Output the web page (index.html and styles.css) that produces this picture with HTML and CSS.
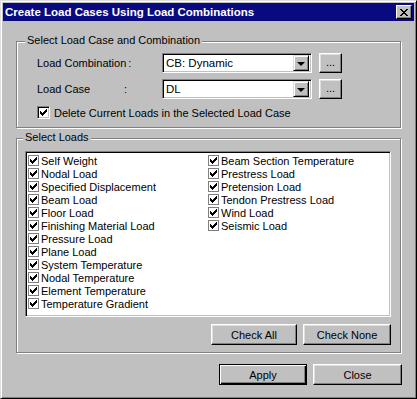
FILE: index.html
```html
<!DOCTYPE html>
<html lang="en">
<head>
  <meta charset="UTF-8">
  <title>Create Load Cases Using Load Combinations</title>
  <link rel="stylesheet" href="styles.css">
</head>
<body>
  <div class="window">
    <div class="titlebar">
      <span class="title">Create Load Cases Using Load Combinations</span>
      <span class="close-btn">
        <svg width="8" height="7" viewBox="0 0 8 7" shape-rendering="crispEdges"><path d="M0 0h2v1h1v1h2v-1h1v-1h2v1h-1v1h-1v1h-1v1h1v1h1v1h1v1h-2v-1h-1v-1h-2v1h-1v1h-2v-1h1v-1h1v-1h1v-1h-1v-1h-1z" fill="#000"/></svg>
      </span>
    </div>

    <div class="content">
      <div class="group group-case">
        <span class="group-title">Select Load Case and Combination</span>

        <div class="field-row">
          <span class="label"><span class="label-name">Load Combination</span>:</span>
          <div class="combo">
            <span class="combo-value">CB: Dynamic</span>
            <span class="combo-arrow"><i></i></span>
          </div>
          <span class="btn btn-dots">...</span>
        </div>

        <div class="field-row">
          <span class="label"><span class="label-name">Load Case</span>:</span>
          <div class="combo">
            <span class="combo-value">DL</span>
            <span class="combo-arrow"><i></i></span>
          </div>
          <span class="btn btn-dots">...</span>
        </div>

        <label class="check-row">
          <span class="checkbox">
            <svg width="7" height="7" viewBox="0 0 7 7" shape-rendering="crispEdges"><path d="M0 2H1V3H2V4H3V3H4V2H5V1H6V0H7V3H6V4H5V5H4V6H3V7H2V6H1V5H0Z" fill="#000"/></svg>
          </span>
          Delete Current Loads in the Selected Load Case
        </label>
      </div>

      <div class="group group-loads">
        <span class="group-title">Select Loads</span>

        <div class="loads-list" id="loads">
          <div class="loads-col"></div>
          <div class="loads-col"></div>
        </div>

        <div class="btn-row">
          <span class="btn btn-check-all">Check All</span>
          <span class="btn btn-check-none">Check None</span>
        </div>
      </div>

      <div class="btn-row dialog-buttons">
        <span class="btn btn-default">Apply</span>
        <span class="btn btn-close">Close</span>
      </div>
    </div>
  </div>

  <script>
    (function() {
      const columns = [
        ['Self Weight', 'Nodal Load', 'Specified Displacement', 'Beam Load', 'Floor Load',
         'Finishing Material Load', 'Pressure Load', 'Plane Load', 'System Temperature',
         'Nodal Temperature', 'Element Temperature', 'Temperature Gradient'],
        ['Beam Section Temperature', 'Prestress Load', 'Pretension Load',
         'Tendon Prestress Load', 'Wind Load', 'Seismic Load']
      ];
      const check = '<svg width="7" height="7" viewBox="0 0 7 7" shape-rendering="crispEdges"><path d="M0 2H1V3H2V4H3V3H4V2H5V1H6V0H7V3H6V4H5V5H4V6H3V7H2V6H1V5H0Z" fill="#000"/></svg>';
      const cols = document.querySelectorAll('#loads .loads-col');

      columns.forEach(function(items, c) {
        items.forEach(function(name) {
          const row = document.createElement('div');
          row.className = 'load-item';
          row.innerHTML = '<span class="list-check">' + check + '</span>' + name;
          cols[c].appendChild(row);
        });
      });
    })();
  </script>
</body>
</html>
```

FILE: styles.css
```css
/* Base */
body {
  margin: 0;
  background: #c0c0c0;
  font-family: "Liberation Sans", Arial, sans-serif;
  font-size: 11px;
  color: #000;
}

/* Dialog frame */
.window {
  box-sizing: border-box;
  width: 417px;
  height: 399px;
  background: #c0c0c0;
  padding: 3px;
  border: 1px solid;
  border-color: #dfdfdf #000 #000 #dfdfdf;
  box-shadow: inset 1px 1px #fff, inset -1px -1px #808080;
}

/* Title bar */
.titlebar {
  height: 18px;
  background: #0a0a80;
  color: #fff;
  font-weight: bold;
  font-size: 11.5px;
  display: flex;
  align-items: center;
  justify-content: space-between;
  padding: 0 2px 0 2px;
  margin: -1px -1px 0 -1px;
}

.close-btn {
  box-sizing: border-box;
  width: 16px;
  height: 14px;
  background: #c0c0c0;
  display: flex;
  align-items: center;
  justify-content: center;
  border: 1px solid;
  border-color: #fff #000 #000 #fff;
  box-shadow: inset -1px -1px #808080;
}

/* Content area */
.content {
  padding: 20px 12px 0 12px;
}

/* Group boxes */
.group {
  border: 1px solid #808080;
  box-shadow: inset 1px 1px #fff, 1px 1px #fff;
  padding: 0 0 8px 20px;
}
.group-title {
  display: block;
  width: fit-content;
  margin: -9px 0 0 6px;
  padding: 0 2px;
  background: #c0c0c0;
  line-height: 14px;
}
.group-case .group-title { margin-left: -12px; }

/* Combination rows */
.field-row {
  display: flex;
  align-items: center;
  height: 20px;
  margin-top: 6px;
}

.label {
  width: 125px;
  flex-shrink: 0;
  white-space: nowrap;
}
.label-name {
  display: inline-block;
  min-width: 85px;
  margin-right: 2px;
}

.combo {
  box-sizing: border-box;
  width: 150px;
  height: 20px;
  background: #fff;
  border: 1px solid;
  border-color: #808080 #fff #fff #808080;
  box-shadow: inset 1px 1px #000, inset -1px -1px #c0c0c0;
  display: flex;
  align-items: center;
  padding: 2px;
}
.combo-value {
  flex: 1;
  padding-left: 1px;
  font-size: 11.5px;
}
.combo-arrow {
  box-sizing: border-box;
  width: 16px;
  height: 16px;
  background: #c0c0c0;
  border: 1px solid;
  border-color: #dfdfdf #000 #000 #dfdfdf;
  box-shadow: inset 1px 1px #fff, inset -1px -1px #808080;
  display: flex;
  align-items: center;
  justify-content: center;
}
.combo-arrow i {
  width: 0;
  height: 0;
  border-left: 4px solid transparent;
  border-right: 4px solid transparent;
  border-top: 4px solid #000;
  margin-top: 1px;
}

/* Buttons */
.btn {
  box-sizing: border-box;
  height: 21px;
  background: #c0c0c0;
  border: 1px solid;
  border-color: #fff #000 #000 #fff;
  box-shadow: inset -1px -1px #808080, inset 1px 1px #dfdfdf;
  display: inline-flex;
  align-items: center;
  justify-content: center;
}
.btn-dots {
  width: 23px;
  height: 20px;
  margin-left: 7px;
  padding-bottom: 2px;
}

/* Checkbox */
.check-row {
  display: flex;
  align-items: center;
  height: 13px;
  margin-top: 7px;
}
.checkbox {
  box-sizing: border-box;
  width: 13px;
  height: 13px;
  background: #fff;
  border: 1px solid;
  border-color: #808080 #fff #fff #808080;
  box-shadow: inset 1px 1px #000, inset -1px -1px #c0c0c0;
  display: flex;
  align-items: center;
  justify-content: center;
  margin-right: 4px;
}

/* Loads group */
.group-loads {
  margin-top: 10px;
  padding: 0 9px 7px 8px;
}
.group-loads .group-title { margin-left: -2px; }
.loads-list {
  box-sizing: border-box;
  height: 166px;
  margin-top: 7px;
  background: #fff;
  border: 1px solid;
  border-color: #808080 #fff #fff #808080;
  box-shadow: inset 1px 1px #000, inset -1px -1px #c0c0c0;
  padding: 2px 0 0 2px;
  display: flex;
}
.loads-col { width: 180px; }
.load-item {
  display: flex;
  align-items: center;
  height: 13px;
  white-space: nowrap;
}
.list-check {
  box-sizing: border-box;
  width: 11px;
  height: 11px;
  border: 1px solid #808080;
  background: #fff;
  display: flex;
  align-items: center;
  justify-content: center;
  margin-right: 2px;
}

.btn-row {
  display: flex;
  justify-content: flex-end;
  gap: 6px;
  margin-top: 7px;
}
.btn-check-all { width: 86px; }
.btn-check-none { width: 88px; }

/* Dialog buttons */
.dialog-buttons {
  margin-top: 11px;
  margin-right: -1px;
}
.btn-default {
  width: 88px;
  border-color: #000;
  box-shadow: inset 1px 1px #fff, inset -1px -1px #000, inset -2px -2px #808080;
}
.btn-close { width: 89px; }
```
